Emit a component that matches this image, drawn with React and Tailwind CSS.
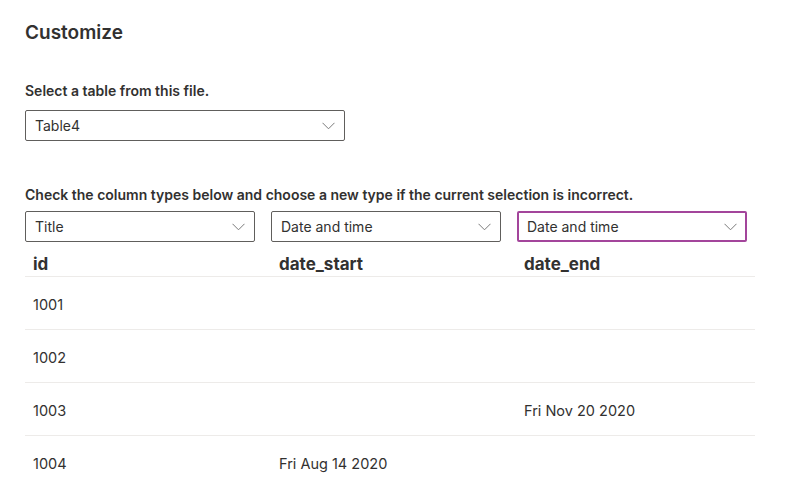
import React from 'react';

const Chevron = () => (
    <svg width="13" height="8" viewBox="0 0 13 8" fill="none" className="shrink-0">
        <path d="M0.5 0.8 L6.5 6.8 L12.5 0.8" stroke="#7a7a7a" strokeWidth="1" />
    </svg>
);

// Select box, plain look
const Dropdown = ({ value, width, active }) => (
    <div
        className={`h-[31px] flex items-center justify-between rounded-[2px] bg-white text-[14px] text-[#323130] ${width} ${
            active ? 'border-2 border-[#a3459b] pl-[8px] pr-[8px]' : 'border border-[#605e5c] pl-[9px] pr-[9px]'
        }`}
    >
        <span>{value}</span>
        <Chevron />
    </div>
);

const rows = [
    { id: '1001', start: '', end: '' },
    { id: '1002', start: '', end: '' },
    { id: '1003', start: '', end: 'Fri Nov 20 2020' },
    { id: '1004', start: 'Fri Aug 14 2020', end: '' },
];

const App = () => {
    return (
        <div className="w-[805px] h-[488px] overflow-hidden bg-white pl-[25px] pt-[21px] text-[#323130]" style={{ fontFamily: 'Inter, "Noto Sans", sans-serif' }}>
            <h1 className="text-[19px] font-semibold leading-[24px]">Customize</h1>

            <div className="mt-[37px] text-[14px] font-semibold leading-[18px]">Select a table from this file.</div>
            <div className="mt-[10px]">
                <Dropdown value="Table4" width="w-[320px]" />
            </div>

            <div className="mt-[45px] text-[14px] font-semibold leading-[18px]">
                Check the column types below and choose a new type if the current selection is incorrect.
            </div>
            <div className="mt-[7px] flex gap-[16px]">
                <Dropdown value="Title" width="w-[230px]" />
                <Dropdown value="Date and time" width="w-[230px]" />
                <Dropdown value="Date and time" width="w-[230px]" active />
            </div>

            {/* table */}
            <div className="w-[730px]">
                <div className="grid grid-cols-[246px_246px_1fr] h-[35px] items-end pb-[1px] border-b border-[#edebe9] text-[17px] leading-[22px] font-bold">
                    <div className="pl-[8px]">id</div>
                    <div className="pl-[8px]">date_start</div>
                    <div className="pl-[7px]">date_end</div>
                </div>
                {rows.map((r) => (
                    <div key={r.id} className="grid grid-cols-[246px_246px_1fr] h-[53px] items-center pt-[3px] border-b border-[#edebe9] text-[14.5px]">
                        <div className="pl-[8px]">{r.id}</div>
                        <div className="pl-[8px]">{r.start}</div>
                        <div className="pl-[7px]">{r.end}</div>
                    </div>
                ))}
            </div>
        </div>
    );
};

export default App;
